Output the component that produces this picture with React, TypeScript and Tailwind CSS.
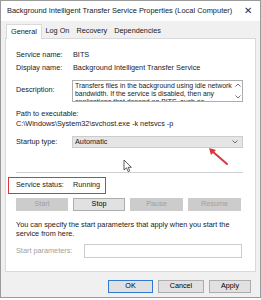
import React from "react";

const font = { fontFamily: '"Liberation Sans", Arial, sans-serif' };

function Btn({ label, disabled, primary, w }: { label: string; disabled?: boolean; primary?: boolean; w: string }) {
  return (
    <div
      className={`${w} h-[13px] flex items-center justify-center text-[7.2px] border ${
        disabled
          ? "bg-[#cccccc] border-[#cccccc] text-[#a0a0a0]"
          : primary
          ? "bg-[#e1e1e1] border-[#2f7ad0] text-black"
          : "bg-[#e1e1e1] border-[#adadad] text-black"
      }`}
    >
      {label}
    </div>
  );
}

export default function App() {
  return (
    <div className="w-[261px] h-[300px] bg-white" style={font}>
      <div className="relative w-[261px] h-[298px] bg-[#f0f0f0] border border-[#9a9a9a] flex flex-col">
        {/* title */}
        <div className="h-[20px] bg-white flex items-center justify-between pl-[6px] pr-[8px] text-[7.45px] text-[#1a1a1a] shrink-0">
          <span className="whitespace-nowrap">Background Intelligent Transfer Service Properties (Local Computer)</span>
          <span className="text-[10px] leading-none text-[#333]">✕</span>
        </div>
        {/* tabs */}
        <div className="h-[17px] flex items-end pl-[5px] text-[7.3px] text-[#1a1a1a] shrink-0">
          <div className="h-[15px] px-[4px] bg-white border border-b-0 border-[#d9d9d9] flex items-center relative top-[1px] z-10">General</div>
          <div className="h-[13px] px-[3.5px] flex items-center">Log On</div>
          <div className="h-[13px] px-[3.5px] flex items-center">Recovery</div>
          <div className="h-[13px] px-[3.5px] flex items-center">Dependencies</div>
        </div>
        {/* panel */}
        <div className="mx-[4px] h-[234px] bg-white border border-[#d9d9d9] pl-[10px] pr-[10px] pt-[11px] text-[7.3px] text-[#1a1a1a] flex flex-col shrink-0">
          <div className="flex h-[10px] items-center shrink-0">
            <span className="w-[57px]">Service name:</span>
            <span>BITS</span>
          </div>
          <div className="flex h-[10px] items-center mt-[3px] shrink-0">
            <span className="w-[57px]">Display name:</span>
            <span>Background Intelligent Transfer Service</span>
          </div>
          <div className="flex mt-[7px] shrink-0">
            <span className="w-[56px] pt-[5px]">Description:</span>
            <div className="w-[171px] h-[22px] border border-[#adadad] flex overflow-hidden">
              <div className="flex-1 pl-[2px] leading-[8px] pt-[1px] text-[6.9px]">
                Transfers files in the background using idle network bandwidth. If the service is disabled, then any applications that depend on BITS, such as Windows
              </div>
              <div className="w-[9px] flex flex-col items-center justify-between py-[2px] text-[#666]">
                <svg width="6" height="4" viewBox="0 0 6 4"><path d="M0.5 3.5 L3 1 L5.5 3.5" fill="none" stroke="#606060" strokeWidth="0.9" /></svg>
                <svg width="6" height="4" viewBox="0 0 6 4"><path d="M0.5 0.5 L3 3 L5.5 0.5" fill="none" stroke="#606060" strokeWidth="0.9" /></svg>
              </div>
            </div>
          </div>
          <div className="h-[10px] flex items-center mt-[7px] shrink-0">Path to executable:</div>
          <div className="h-[10px] flex items-center shrink-0">C:\Windows\System32\svchost.exe -k netsvcs -p</div>
          <div className="flex items-center mt-[7px] shrink-0">
            <span className="w-[56px]">Startup type:</span>
            <div className="w-[171px] h-[12px] bg-[#e5e5e5] border border-[#cccccc] flex items-center justify-between pl-[2px] pr-[4px]">
              <span>Automatic</span>
              <svg width="6" height="4" viewBox="0 0 6 4"><path d="M0.5 0.5 L3 3 L5.5 0.5" fill="none" stroke="#606060" strokeWidth="0.9" /></svg>
            </div>
          </div>
          <div className="w-[227px] h-px bg-[#d0d0d0] mt-[24px] shrink-0" />
          <div className="-ml-[8px] mt-[4px] w-[98px] h-[17px] border-[1.5px] border-[#d9363e] flex items-center pl-[7px] shrink-0">
            <span className="w-[57px]">Service status:</span>
            <span>Running</span>
          </div>
          <div className="flex gap-[5px] mt-[4px] shrink-0">
            <Btn label="Start" disabled w="w-[52px]" />
            <Btn label="Stop" w="w-[52px]" />
            <Btn label="Pause" disabled w="w-[53px]" />
            <Btn label="Resume" disabled w="w-[53px]" />
          </div>
          <div className="mt-[9px] leading-[9px] w-[234px] shrink-0">
            You can specify the start parameters that apply when you start the service from here.
          </div>
          <div className="flex items-center mt-[6px] shrink-0">
            <span className="w-[68px] text-[#a0a0a0]">Start parameters:</span>
            <div className="w-[158px] h-[14px] border border-[#cccccc] bg-white" />
          </div>
        </div>
        {/* bottom buttons */}
        <div className="flex justify-end gap-[5px] pr-[9px] mt-[8px]">
          <Btn label="OK" primary w="w-[45px]" />
          <Btn label="Cancel" w="w-[46px]" />
          <Btn label="Apply" w="w-[42px]" />
        </div>
        {/* red arrow */}
        <svg className="absolute left-[204px] top-[143px]" width="26" height="24" viewBox="0 0 26 24">
          <path d="M22 20 L7 7" stroke="#d9363e" strokeWidth="2" strokeLinecap="round" />
          <path d="M4 4 L11 6 L6 11 Z" fill="#d9363e" />
        </svg>
        {/* cursor */}
        <svg className="absolute left-[122px] top-[158px]" width="10" height="14" viewBox="0 0 10 14">
          <path d="M1 1 L1 11 L3.5 8.8 L5.2 12.6 L6.8 11.9 L5.2 8.3 L8.4 8.3 Z" fill="white" stroke="#333" strokeWidth="0.8" strokeLinejoin="round" />
        </svg>
      </div>
    </div>
  );
}
